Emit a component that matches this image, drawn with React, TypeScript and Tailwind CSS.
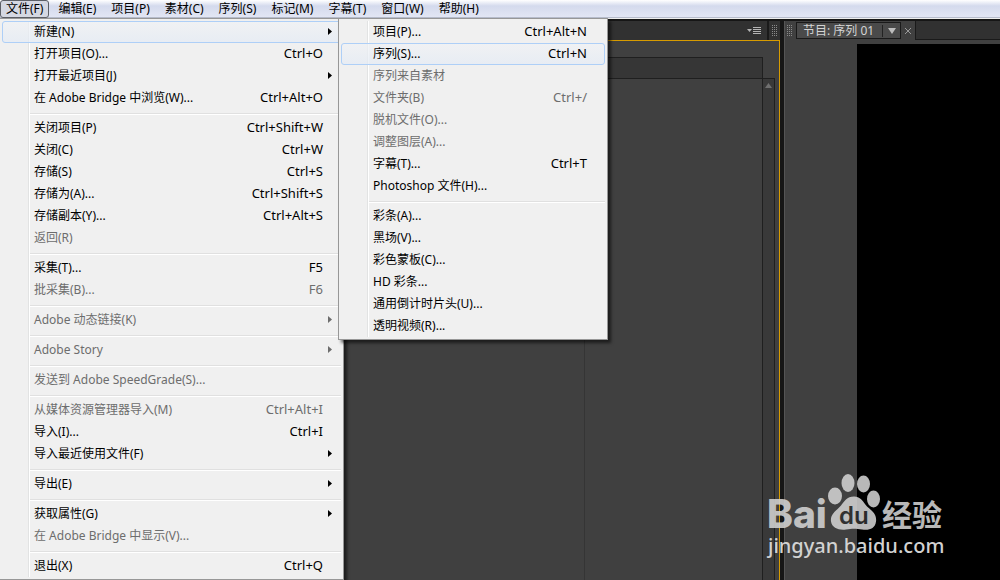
import React from 'react';

interface MenuEntry {
  label: string;
  keys?: string;
  disabled?: boolean;
  active?: boolean;
  sub?: boolean;
}

const MENU_BAR = ['文件(F)', '编辑(E)', '项目(P)', '素材(C)', '序列(S)', '标记(M)', '字幕(T)', '窗口(W)', '帮助(H)'];

// every group is divided from the next one by a separator
const FILE_MENU: MenuEntry[][] = [
  [
    { label: '新建(N)', sub: true, active: true },
    { label: '打开项目(O)...', keys: 'Ctrl+O' },
    { label: '打开最近项目(J)', sub: true },
    { label: '在 Adobe Bridge 中浏览(W)...', keys: 'Ctrl+Alt+O' },
  ],
  [
    { label: '关闭项目(P)', keys: 'Ctrl+Shift+W' },
    { label: '关闭(C)', keys: 'Ctrl+W' },
    { label: '存储(S)', keys: 'Ctrl+S' },
    { label: '存储为(A)...', keys: 'Ctrl+Shift+S' },
    { label: '存储副本(Y)...', keys: 'Ctrl+Alt+S' },
    { label: '返回(R)', disabled: true },
  ],
  [
    { label: '采集(T)...', keys: 'F5' },
    { label: '批采集(B)...', keys: 'F6', disabled: true },
  ],
  [{ label: 'Adobe 动态链接(K)', sub: true, disabled: true }],
  [{ label: 'Adobe Story', sub: true, disabled: true }],
  [{ label: '发送到 Adobe SpeedGrade(S)...', disabled: true }],
  [
    { label: '从媒体资源管理器导入(M)', keys: 'Ctrl+Alt+I', disabled: true },
    { label: '导入(I)...', keys: 'Ctrl+I' },
    { label: '导入最近使用文件(F)', sub: true },
  ],
  [{ label: '导出(E)', sub: true }],
  [
    { label: '获取属性(G)', sub: true },
    { label: '在 Adobe Bridge 中显示(V)...', disabled: true },
  ],
  [{ label: '退出(X)', keys: 'Ctrl+Q' }],
];

const NEW_MENU: MenuEntry[][] = [
  [
    { label: '项目(P)...', keys: 'Ctrl+Alt+N' },
    { label: '序列(S)...', keys: 'Ctrl+N', active: true },
    { label: '序列来自素材', disabled: true },
    { label: '文件夹(B)', keys: 'Ctrl+/', disabled: true },
    { label: '脱机文件(O)...', disabled: true },
    { label: '调整图层(A)...', disabled: true },
    { label: '字幕(T)...', keys: 'Ctrl+T' },
    { label: 'Photoshop 文件(H)...' },
  ],
  [
    { label: '彩条(A)...' },
    { label: '黑场(V)...' },
    { label: '彩色蒙板(C)...' },
    { label: 'HD 彩条...' },
    { label: '通用倒计时片头(U)...' },
    { label: '透明视频(R)...' },
  ],
];

const Menu: React.FC<{ groups: MenuEntry[][]; className: string }> = ({ groups, className }) => (
  <div role="menu" className={`absolute border border-[#979797] bg-[#f0f0f0] p-[2px] shadow-[3px_3px_3px_rgba(0,0,0,0.55)] ${className}`}>
    <div className="pointer-events-none absolute inset-y-[2px] left-7 w-[2px] border-l border-[#e2e3e3] bg-white" />
    {groups.map((group, idx) => (
      <div key={idx} role="group">
        {idx > 0 && <div className="mt-1 mb-[2px] ml-7 h-[2px] border-t border-[#e0e0e0] bg-white" />}
        {group.map((item) => (
          <button
            key={item.label}
            role="menuitem"
            disabled={item.disabled}
            className={`relative flex h-[22px] w-full items-center rounded-[3px] border pr-[17px] pl-[31px] text-left whitespace-nowrap ${
              item.active ? 'border-[#aecff7] bg-linear-to-b from-[#f0f2f5]/70 to-[#e4ebf5]/70' : 'border-transparent'
            } ${item.disabled ? 'text-[#6d6d6d]' : 'text-black'}`}
          >
            <span className="flex-1">{item.label}</span>
            {item.keys && <span className="text-[13px]">{item.keys}</span>}
            {item.sub && (
              <svg className="absolute right-2 h-2 w-1" viewBox="0 0 4 8" fill="currentColor">
                <path d="M0 0L4 3.5L0 7Z" />
              </svg>
            )}
          </button>
        ))}
      </div>
    ))}
  </div>
);

const Grip: React.FC = () => (
  <svg className="h-[11px] w-[5px] shrink-0" viewBox="0 0 5 11" stroke="#8a8a8a" strokeDasharray="1 1">
    <path d="M.5 0V11M2.5 0V11M4.5 0V11" />
  </svg>
);

const Watermark: React.FC = () => (
  <div className="absolute right-[54px] bottom-[22px] w-[178px] text-[#d2d2d2]">
    <svg className="h-[60px] w-full overflow-visible" viewBox="0 0 178 60" fill="currentColor" opacity="0.88">
      <text x="-1" y="54" fontFamily="Inter, sans-serif" fontSize="39" fontWeight="800">Bai</text>
      <ellipse cx="67" cy="22" rx="7" ry="8.5" />
      <ellipse cx="80" cy="9" rx="6.5" ry="9" />
      <ellipse cx="95.5" cy="10" rx="6.5" ry="8.5" />
      <ellipse cx="105.5" cy="25" rx="6.5" ry="8.5" />
      <path d="M86 22.5C93 22.5 95 28 99 32.5C104 37 109 40 108 47.5C107 55 101 56.5 94 55.5C88 54.5 84 54.5 78 55.5C71 56.5 64 54 63 47.5C62 39.5 69 36.5 73 31.5C76 27.5 79 22.5 86 22.5Z" />
      <text x="71" y="50" fontFamily="Inter, sans-serif" fontSize="24" fontWeight="600" fill="#303030">du</text>
      <text x="114" y="52" fontFamily="'Noto Sans CJK SC', sans-serif" fontSize="30" fontWeight="700">经验</text>
    </svg>
    <div className="font-['Noto_Sans','Open_Sans',sans-serif] text-xl leading-6 font-medium">jingyan.baidu.com</div>
  </div>
);

const App: React.FC = () => {
  return (
    <div className="relative flex h-screen flex-col overflow-hidden bg-[#161616] font-['Noto_Sans','Noto_Sans_CJK_SC',sans-serif] text-xs">
      <nav className="flex h-[18px] shrink-0 gap-[3px] border-b border-[#b6bccc] bg-linear-to-b from-white from-0% via-[#d4daed] via-35% to-[#e2e6f4]">
        {MENU_BAR.map((name, idx) => (
          <button
            key={name}
            className={`h-[18px] rounded-[3px] border px-[5px] leading-4 whitespace-nowrap ${
              idx === 0 ? 'border-[#5c5f66] bg-[#d5d8e2]' : 'border-transparent'
            }`}
          >
            {name}
          </button>
        ))}
      </nav>

      <main className="flex min-h-0 flex-1 border-t border-[#eeeeee] pt-[2px]">
        <section className="flex w-[780px] shrink-0 flex-col">
          <header className="flex h-[19px] shrink-0 items-center justify-end bg-[#313131]">
            <svg className="mr-[6px] h-2 w-[14px]" viewBox="0 0 14 8" fill="#b4b4b4">
              <path d="M0 2H5L2.5 5Z" />
              <path d="M6 0H14V1H6ZM6 2H14V3H6ZM6 4H14V5H6ZM6 6H14V7H6Z" />
            </svg>
            <div className="flex h-full items-center border-l-2 border-[#1a1a1a] px-[3px]">
              <Grip />
            </div>
          </header>
          <div className="flex flex-1 border-t border-r border-[#d79b00] bg-[#404040] pt-4 pr-1">
            <div className="flex flex-1 flex-col">
              <div className="mr-3 h-[21px] border-t border-r border-[#1f1f1f] bg-[#363636]" />
              <div className="flex flex-1 border-t border-r border-[#1f1f1f]">
                <div className="w-[585px] border-r border-[#353535]" />
                <div className="flex-1 border-r border-[#1f1f1f]" />
                <div className="flex w-[11px] justify-center bg-[#393939] pt-1">
                  <svg className="h-[5px] w-[7px]" viewBox="0 0 7 5" fill="#707070">
                    <path d="M3.5 0L7 5H0Z" />
                  </svg>
                </div>
              </div>
            </div>
          </div>
        </section>

        <section className="ml-1 flex flex-1 flex-col border-l border-[#555] bg-[#404040]">
          <header className="flex h-[19px] shrink-0">
            <div className="flex items-center gap-1 pl-[2px]">
              <Grip />
              <button className="flex h-[17px] items-center border border-[#1a1a1a] bg-[#4a4a4a] pl-[6px] text-[#d4d4d4]">
                <span className="pr-2 leading-4">节目: 序列 01</span>
                <span className="flex h-3 w-[18px] items-center justify-center border-l border-[#222]">
                  <svg className="h-[6px] w-2" viewBox="0 0 8 6" fill="#bdbdbd">
                    <path d="M0 0H8L4 6Z" />
                  </svg>
                </span>
              </button>
              <button aria-label="关闭">
                <svg className="h-[6px] w-[6px]" viewBox="0 0 6 6" stroke="#9a9a9a">
                  <path d="M0 0L6 6M6 0L0 6" />
                </svg>
              </button>
            </div>
            <div className="ml-1 flex-1 border-b border-l border-[#1a1a1a] bg-[#313131]" />
          </header>
          <div className="mt-1 ml-[72px] flex-1 bg-black" />
        </section>
      </main>

      <Menu groups={FILE_MENU} className="top-[18px] left-[-1px] w-[345px]" />
      <Menu groups={NEW_MENU} className="top-[18px] left-[338px] w-[270px]" />
      <Watermark />
    </div>
  );
};

export default App;
